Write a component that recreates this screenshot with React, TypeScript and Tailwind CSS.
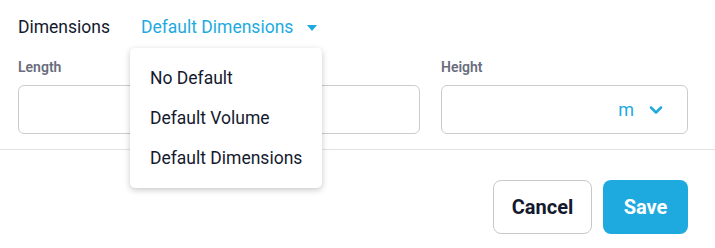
import { ChevronDown } from "lucide-react";

export default function App()
{
    return(
        <div className="relative w-[715px] h-[248px] bg-white overflow-hidden text-[#141a2e]" style={{ fontFamily: "Roboto, 'Open Sans', sans-serif" }}>
            {/* header row */}
            <div className="flex items-center h-6 pl-[18px] mt-[15px]">
                <span className="w-[123px] text-[17.5px]">Dimensions</span>
                <div className="relative">
                    <button type="button" className="flex items-center gap-[14px] text-[17.5px] text-[#1eaade]">
                        Default Dimensions
                        <svg width="10" height="6" viewBox="0 0 10 6" className="mt-px">
                            <path d="M0 0 H10 L5 6 Z" fill="#1eaade" />
                        </svg>
                    </button>
                    <div className="absolute z-10 left-[-11px] top-[34px] w-[192px] pt-[10px] pb-[10px] bg-white rounded-[5px] shadow-[0_2px_6px_rgba(0,0,0,0.22)]">
                        <div className="h-10 flex items-center pl-5 text-[17.5px]">No Default</div>
                        <div className="h-10 flex items-center pl-5 text-[17.5px]">Default Volume</div>
                        <div className="h-10 flex items-center pl-5 text-[17.5px]">Default Dimensions</div>
                    </div>
                </div>
            </div>

            {/* fields */}
            <div className="flex gap-[21px] px-[18px] mt-[19px]">
                <div className="w-[402px]">
                    <label className="block h-[18px] text-sm font-semibold text-[#696d7d] leading-[18px]">Length</label>
                    <div className="mt-[9px] h-[49px] border border-[#cccccc] rounded-[6px]"></div>
                </div>
                <div className="w-[247px]">
                    <label className="block h-[18px] text-sm font-semibold text-[#696d7d] leading-[18px]">Height</label>
                    <div className="mt-[9px] h-[49px] border border-[#cccccc] rounded-[6px] flex items-center justify-end pr-[21px] gap-[12px] text-[#1eaade]">
                        <span className="text-[18px] leading-none">m</span>
                        <ChevronDown size={20} strokeWidth={3} />
                    </div>
                </div>
            </div>

            <div className="mt-[15px] border-t border-[#e2e2e2]"></div>

            {/* actions */}
            <div className="flex justify-end gap-[11px] pr-[27px] mt-[30px]">
                <button type="button" className="w-[99px] h-[54px] border border-[#c8c8c8] rounded-[8px] text-[20px] font-bold text-[#141a2e]">Cancel</button>
                <button type="button" className="w-[85px] h-[54px] bg-[#1eaade] rounded-[8px] text-[20px] font-bold text-white">Save</button>
            </div>
        </div>
    )
}
